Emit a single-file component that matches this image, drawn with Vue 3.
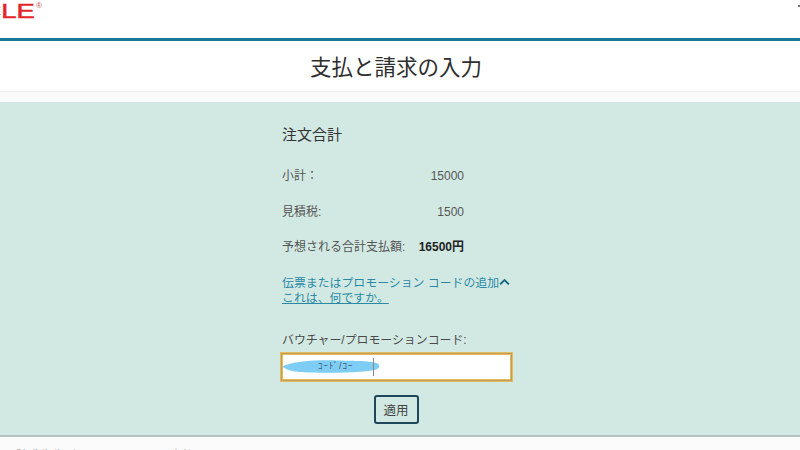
<script setup>
const rows = [
  { label: '小計：', value: '15000' },
  { label: '見積税:', value: '1500' },
]
</script>

<template>
  <div class="page">
    <header class="top">
      <span class="logo">ORACLE</span>
      <span class="reg">®</span>
      <span class="corner"></span>
    </header>
    <div class="title-band">
      <h1>支払と請求の入力</h1>
    </div>
    <div class="spacer"></div>
    <main class="panel">
      <section class="col">
        <h2>注文合計</h2>
        <div v-for="r in rows" :key="r.label" class="row">
          <span>{{ r.label }}</span>
          <span>{{ r.value }}</span>
        </div>
        <div class="row total">
          <span>予想される合計支払額:</span>
          <strong>16500円</strong>
        </div>
        <div class="links">
          <a class="link-plain">伝票またはプロモーション コードの追加<svg class="chev" viewBox="0 0 12 8" width="11" height="8"><path d="M1.2 6.6 6 2l4.8 4.6" fill="none" stroke="#17667f" stroke-width="2.1"/></svg></a>
          <a class="link-under">これは、何ですか。</a>
        </div>
        <label class="lbl">バウチャー/プロモーションコード:</label>
        <div class="field">
          <svg class="scribble" viewBox="0 0 100 16" width="99" height="15" preserveAspectRatio="none">
            <path d="M0 8C10 3 30 1 55 1.500S92 2 97 5Q100 8 96 11C85 15 50 15 30 14.500S6 12 0 8Z" fill="#7ecdf4"/>
          </svg>
          <span class="peek">ｺｰﾄﾞ/ｺｰ</span>
          <span class="caret"></span>
        </div>
        <div class="btn-wrap">
          <button type="button" class="btn">適用</button>
        </div>
      </section>
    </main>
    <footer class="foot">
      <span class="f1">請求先住所</span>
      <span class="f2">支払</span>
    </footer>
  </div>
</template>

<style scoped>
.page {
  width: 800px;
  height: 450px;
  overflow: hidden;
  background: #fff;
  font-family: "Liberation Sans", "Noto Sans CJK JP", sans-serif;
  color: #333;
  display: flex;
  flex-direction: column;
}
.top {
  height: 38px;
  flex: none;
  position: relative;
  overflow: hidden;
}
.logo {
  position: absolute;
  left: -78px;
  top: 0;
  font-size: 20px;
  line-height: 23px;
  font-weight: 400;
  -webkit-text-stroke: 0.5px #e4262b;
  color: #e4262b;
  transform: scaleX(1.37);
  transform-origin: left top;
}
.reg {
  position: absolute;
  left: 36px;
  top: 1px;
  font-size: 8px;
  color: #c0504a;
}
.corner {
  position: absolute;
  right: 0;
  top: 5px;
  width: 2px;
  height: 2px;
  background: #777;
}
.title-band {
  height: 53px;
  flex: none;
  border-top: 3px solid #17799a;
  box-sizing: border-box;
  padding: 0 8px 2px 0;
  display: flex;
  align-items: center;
  justify-content: center;
}
h1 {
  margin: 0;
  font-size: 21.500px;
  font-weight: 400;
  color: #2e2e2e;
}
.spacer {
  height: 11px;
  flex: none;
  background: #fafafa;
  border-top: 1px solid #efefef;
  box-sizing: border-box;
}
.panel {
  height: 333px;
  flex: none;
  background: #d2e9e3;
  border-bottom: 2px solid #b4c1bc;
  padding-left: 282px;
}
.col {
  width: 230px;
}
h2 {
  margin: 0;
  padding-top: 24px;
  font-size: 15px;
  line-height: 18px;
  font-weight: 400;
  color: #333;
}
.row {
  width: 182px;
  display: flex;
  justify-content: space-between;
  font-size: 12px;
  line-height: 16px;
  color: #555;
  margin-top: 20px;
}
.row:first-of-type {
  margin-top: 24px;
}
.total {
  margin-top: 19px;
}
.total strong {
  color: #222;
}
.links {
  margin-top: 21px;
  font-size: 11.900px;
  line-height: 15px;
  color: #2a8aa6;
}
.links a {
  display: block;
}
.link-plain {
  white-space: nowrap;
}
.chev {
  vertical-align: 1px;
}
.link-under {
  text-decoration: underline;
}
.lbl {
  display: block;
  margin-top: 27px;
  font-size: 11.900px;
  line-height: 15px;
  color: #4a4a4a;
}
.field {
  position: relative;
  margin-top: 4px;
  width: 233px;
  margin-left: -2px;
  height: 30px;
  box-sizing: border-box;
  background: #fff;
  border: 3px solid #e6bb5e;
  outline: 1px solid #bd9c5c;
  outline-offset: -2px;
}
.scribble {
  position: absolute;
  left: -1px;
  top: 4px;
}
.peek {
  position: absolute;
  left: 35px;
  top: 6px;
  font-size: 9px;
  line-height: 10px;
  letter-spacing: 1px;
  color: #3f5a75;
}
.caret {
  position: absolute;
  left: 90px;
  top: 3px;
  width: 1px;
  height: 18px;
  background: #8a8a8a;
}
.btn-wrap {
  width: 228px;
  display: flex;
  justify-content: center;
  margin-top: 13px;
}
.btn {
  width: 45px;
  height: 29px;
  padding: 0;
  background: #d2e9e3;
  border: 2px solid #1f4759;
  border-radius: 3px;
  font: 12.500px "Liberation Sans", "Noto Sans CJK JP", sans-serif;
  color: #444;
}
.foot {
  flex: 1;
  background: #fbfbfb;
  position: relative;
  overflow: hidden;
  font-size: 12px;
  color: #aaa;
}
.f1 {
  position: absolute;
  left: 16px;
  top: 9px;
}
.f2 {
  position: absolute;
  left: 170px;
  top: 9px;
}
</style>

<style>
html, body { margin: 0; background: #fff; }
</style>
